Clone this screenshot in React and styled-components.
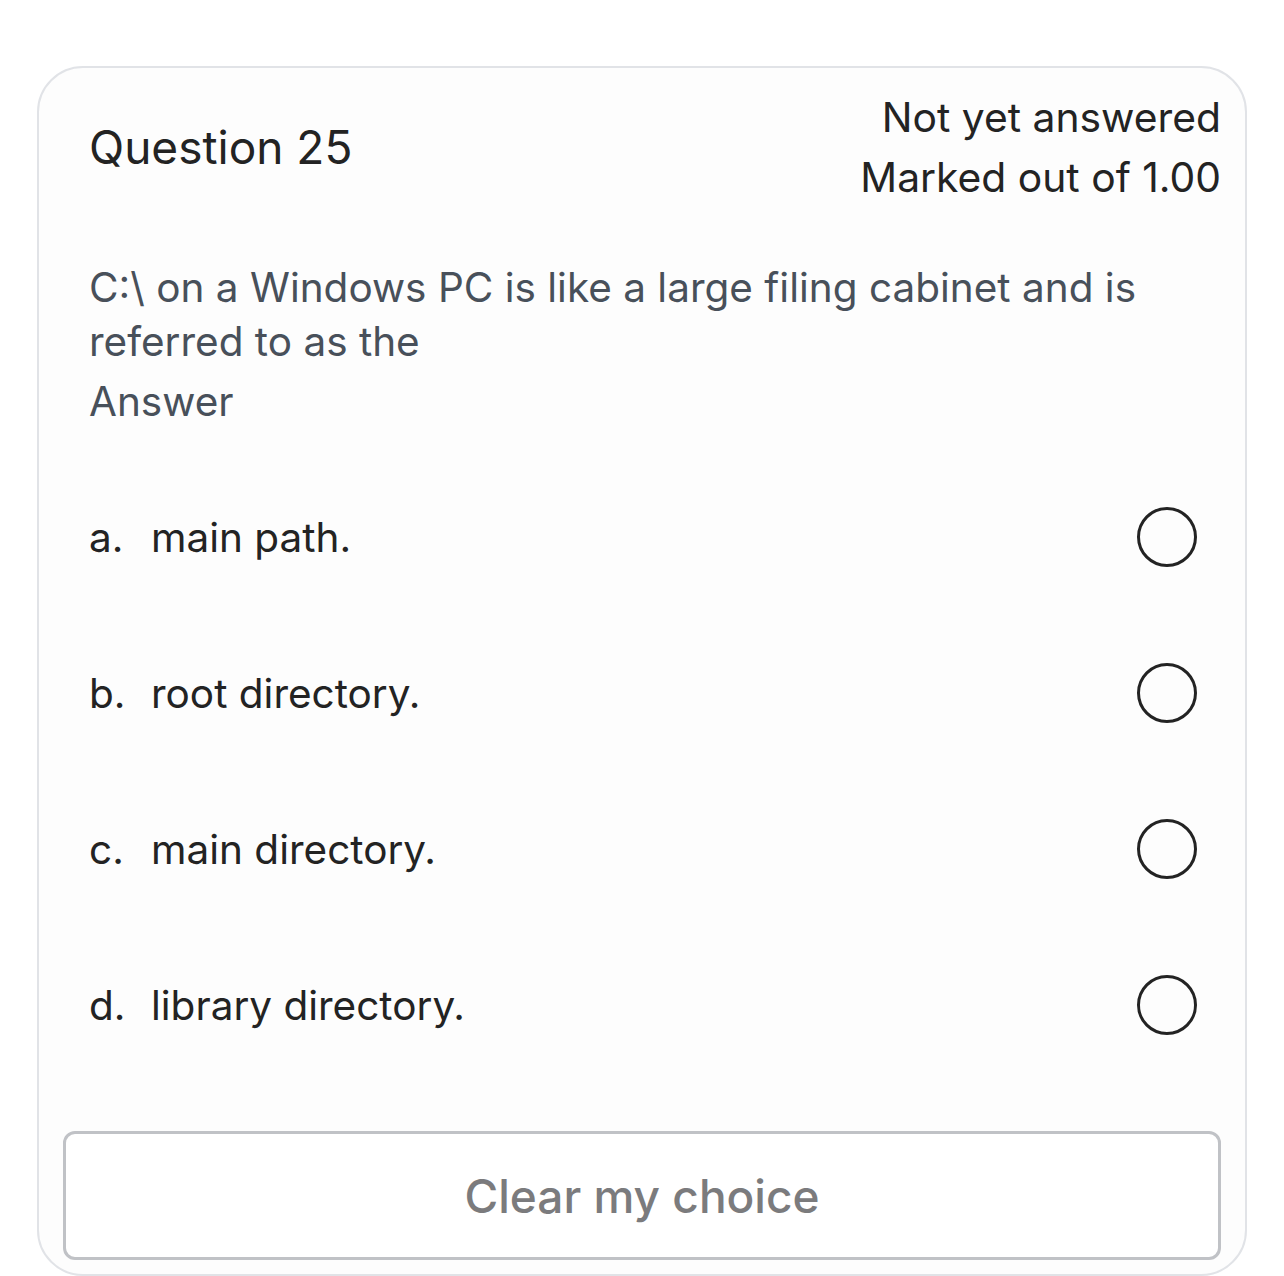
import React from 'react'
import styled, { createGlobalStyle } from 'styled-components'

const Global = createGlobalStyle`
  html, body {
    margin: 0;
    padding: 0;
    background: #ffffff;
  }
  body {
    font-family: Inter, "Noto Sans", "Liberation Sans", sans-serif;
    -webkit-font-smoothing: antialiased;
  }
`

const Page = styled.div`
  width: 1284px;
  height: 1276px;
  overflow: hidden;
  padding: 66px 0 0 37px;
  box-sizing: border-box;
`

const Card = styled.div`
  width: 1210px;
  height: 1210px;
  box-sizing: border-box;
  border: 2px solid #e1e3e7;
  border-radius: 46px;
  background: #fdfdfd;
  padding: 19px 24px 14px 24px;
  display: flex;
  flex-direction: column;
`

const Header = styled.div`
  display: flex;
  justify-content: space-between;
  align-items: center;
  padding-left: 26px;
`

const Title = styled.h3`
  margin: 0;
  font-size: 46px;
  font-weight: 400;
  color: #232323;
`

const Status = styled.div`
  text-align: right;
  font-size: 40.8px;
  line-height: 60px;
  color: #232323;
`

const Body = styled.div`
  padding-left: 26px;
  margin-top: 54px;
`

const Prompt = styled.p`
  margin: 0;
  font-size: 40.5px;
  line-height: 54px;
  color: #48505a;
`

const AnswerLabel = styled.div`
  margin-top: 6px;
  font-size: 40.5px;
  line-height: 54px;
  color: #48505a;
`

const Options = styled.div`
  display: flex;
  flex-direction: column;
  gap: 96px;
  margin-top: 78px;
  padding-right: 24px;
`

const Option = styled.label`
  display: flex;
  align-items: center;
  height: 60px;
  font-size: 40.5px;
  color: #232323;
`

const Letter = styled.span`
  width: 62px;
`

const OptionText = styled.span`
  flex: 1;
`

const Radio = styled.span`
  width: 54px;
  height: 54px;
  border: 3px solid #232323;
  border-radius: 50%;
`

const ClearButton = styled.button`
  margin-top: auto;
  width: 100%;
  height: 129px;
  flex-shrink: 0;
  border: 3px solid #c0c2c6;
  border-radius: 12px;
  background: #ffffff;
  font-family: inherit;
  font-size: 46px;
  font-weight: 500;
  color: #7b7b7d;
`

const options = [
  ['a.', 'main path.'],
  ['b.', 'root directory.'],
  ['c.', 'main directory.'],
  ['d.', 'library directory.'],
]

export default function App() {
  return (
    <Page>
      <Global />
      <Card>
        <Header>
          <Title>Question 25</Title>
          <Status>
            <div>Not yet answered</div>
            <div>Marked out of 1.00</div>
          </Status>
        </Header>
        <Body>
          <Prompt>C:\ on a Windows PC is like a large filing cabinet and is referred to as the</Prompt>
          <AnswerLabel>Answer</AnswerLabel>
          <Options>
            {options.map(([l, t]) => (
              <Option key={l}>
                <Letter>{l}</Letter>
                <OptionText>{t}</OptionText>
                <Radio />
              </Option>
            ))}
          </Options>
        </Body>
        <ClearButton>Clear my choice</ClearButton>
      </Card>
    </Page>
  )
}
